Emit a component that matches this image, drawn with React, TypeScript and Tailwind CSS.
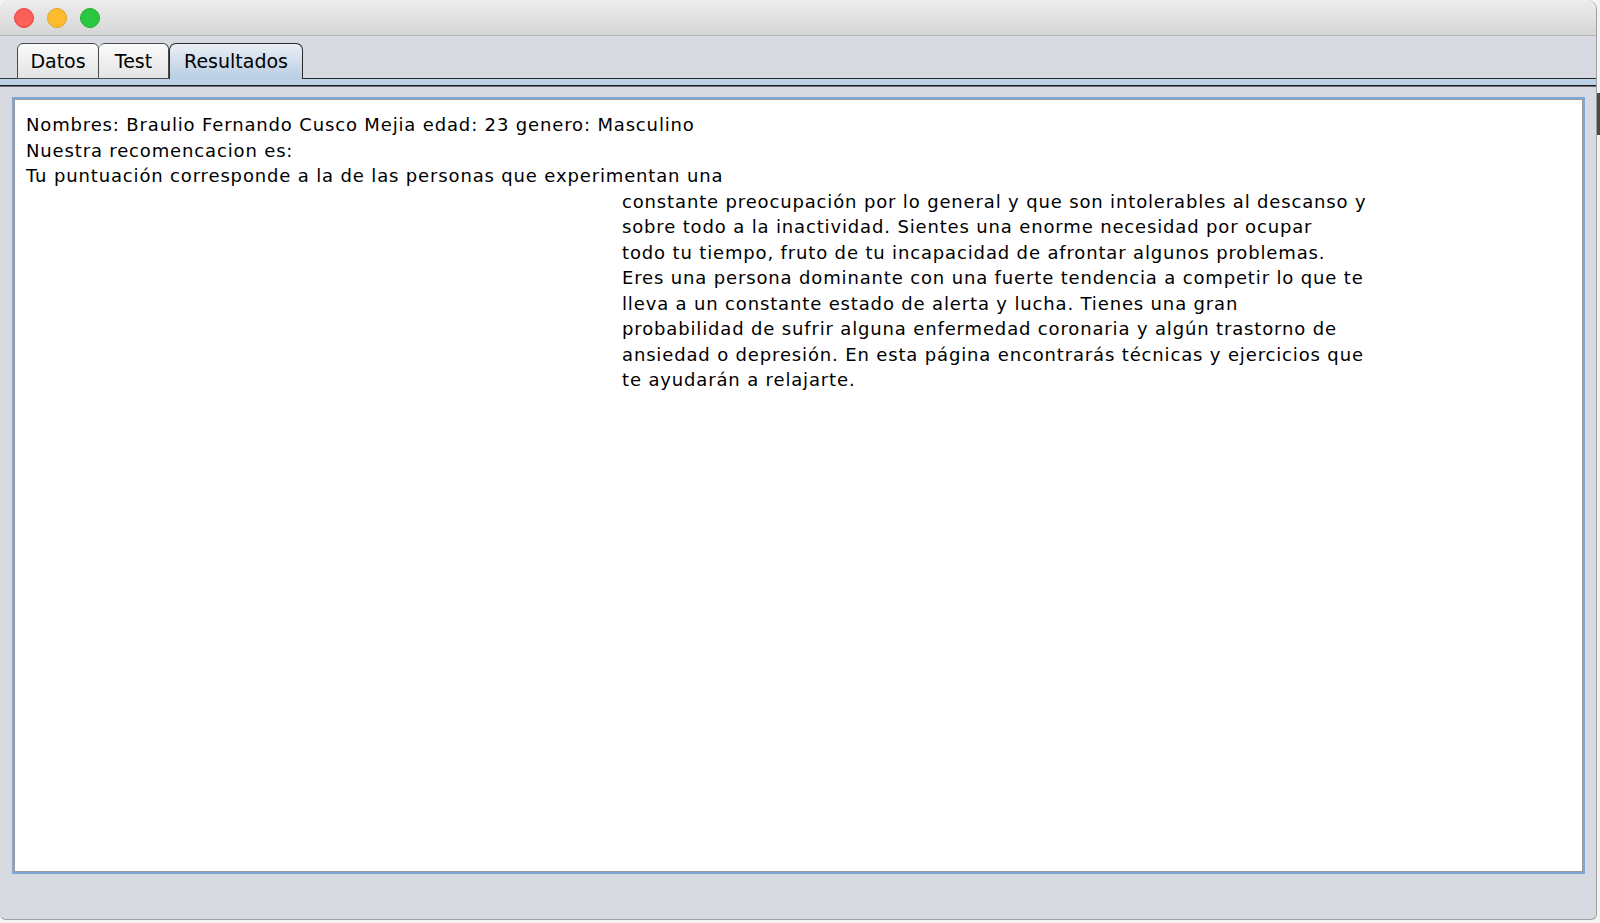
import React from "react";

const lines2 = [
  "constante preocupación por lo general y que son intolerables al descanso y",
  "sobre todo a la inactividad. Sientes una enorme necesidad por ocupar",
  "todo tu tiempo, fruto de tu incapacidad de afrontar algunos problemas.",
  "Eres una persona dominante con una fuerte tendencia a competir lo que te",
  "lleva a un constante estado de alerta y lucha. Tienes una gran",
  "probabilidad de sufrir alguna enfermedad coronaria y algún trastorno de",
  "ansiedad o depresión. En esta página encontrarás técnicas y ejercicios que",
  "te ayudarán a relajarte.",
];

export default function App() {
  const font = { fontFamily: '"DejaVu Sans", "Noto Sans", sans-serif' };
  return (
    <div className="w-[1600px] h-[923px] bg-[#f4f4f4] relative overflow-hidden" style={font}>
      <div className="absolute right-0 top-[93px] w-[6px] h-[42px] bg-[#4a4a4a]" />
      <div className="w-[1597px] h-[920px] rounded-t-[9px] rounded-b-[6px] bg-[#d7dae1] border-r border-b border-[#a0a0a0] flex flex-col overflow-hidden relative">
        {/* title bar */}
        <div className="h-[36px] shrink-0 bg-gradient-to-b from-[#ededed] to-[#d5d5d5] border-b border-[#b4b4b4] flex items-center pl-[14px] gap-[13px]">
          <div className="w-[20px] h-[20px] rounded-full bg-[#fc5f57] border border-[#e2463f]" />
          <div className="w-[20px] h-[20px] rounded-full bg-[#fdbc2e] border border-[#e0a226]" />
          <div className="w-[20px] h-[20px] rounded-full bg-[#29c840] border border-[#1dad2b]" />
        </div>
        {/* tabs */}
        <div className="shrink-0 flex flex-col">
          <div className="flex items-end pt-[6px] h-[43px]">
            <div className="w-[17px] h-full border-b border-[#3a3a3a]" />
            <div className="w-[82px] h-[36px] rounded-t-[6px] border border-[#4a4a4a] bg-gradient-to-b from-[#fbfbfb] to-[#e3e3e3] flex items-center justify-center text-[19px] text-black pt-[1px]">Datos</div>
            <div className="w-[70px] h-[36px] rounded-t-[6px] border border-l-0 border-[#4a4a4a] bg-gradient-to-b from-[#fbfbfb] to-[#e3e3e3] flex items-center justify-center text-[19px] text-black pt-[1px]">Test</div>
            <div className="w-[134px] h-[36px] rounded-t-[7px] border border-b-0 border-[#2a2a2a] bg-gradient-to-b from-[#eaeff5] to-[#b9cde2] flex items-center justify-center text-[19px] text-black">Resultados</div>
            <div className="flex-1 h-full border-b border-[#2a2a2a]" />
          </div>
          <div className="h-[6px] bg-[#bcd1e6]" />
          <div className="h-[1px] bg-[#1c1c1c]" />
          <div className="h-[1px] bg-[#6a6d73]" />
        </div>
        {/* content */}
        <div className="flex-1 pt-[10px] pl-[12px] pr-[11px] pb-[45px] flex">
          <div className="flex-1 border-2 border-[#7ea7d7] bg-white">
            <div className="w-full h-full border border-[#9a9a9a] pl-[11px] pt-[12px] text-[18px] leading-[25.5px] tracking-[0.85px] text-black whitespace-pre">
              <div>Nombres: Braulio Fernando Cusco Mejia edad: 23 genero: Masculino</div>
              <div>Nuestra recomencacion es:</div>
              <div>Tu puntuación corresponde a la de las personas que experimentan una</div>
              <div className="pl-[596px]">
                {lines2.map((l, i) => (
                  <div key={i}>{l}</div>
                ))}
              </div>
            </div>
          </div>
        </div>
      </div>
    </div>
  );
}
